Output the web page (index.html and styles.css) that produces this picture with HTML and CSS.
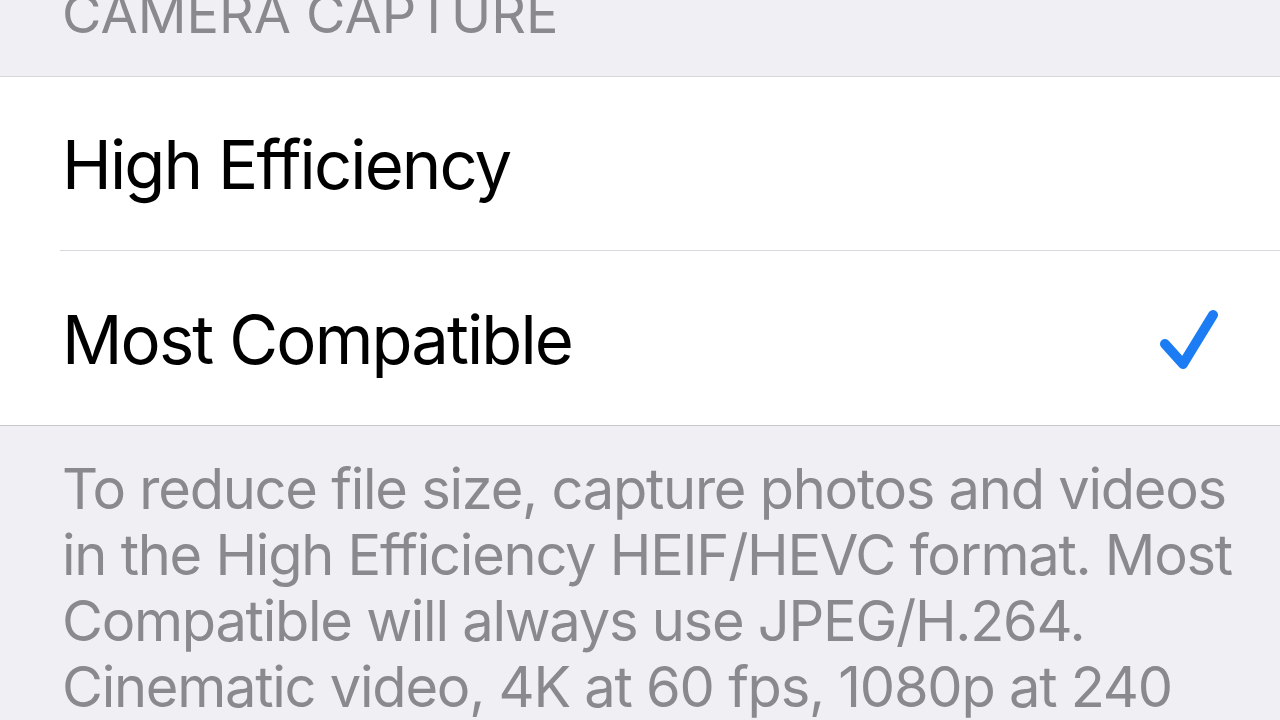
FILE: index.html
```html
<!DOCTYPE html>
<html lang="en">
<head>
<meta charset="utf-8">
<title>Camera Capture</title>
<link rel="stylesheet" href="styles.css">
</head>
<body>
<div class="page">
  <div class="section-header"><span class="section-title">CAMERA CAPTURE</span></div>
  <div class="group">
    <div class="row">
      <div class="row-inner with-sep"><span class="row-label">High Efficiency</span></div>
    </div>
    <div class="row">
      <div class="row-inner"><span class="row-label">Most Compatible</span>
        <svg class="check" width="64" height="64" viewBox="0 0 64 64" aria-hidden="true">
          <polyline points="7,36 25,56 55,7" fill="none" stroke="#1c7cf4" stroke-width="10" stroke-linecap="round" stroke-linejoin="round"/>
        </svg>
      </div>
    </div>
  </div>
  <div class="section-footer">To reduce file size, capture photos and videos in the High Efficiency HEIF/HEVC format. Most Compatible will always use JPEG/H.264. Cinematic video, 4K at 60 fps, 1080p at 240 fps, and HDR video require High Efficiency.</div>
</div>
</body>
</html>
```

FILE: styles.css
```css
html, body {
  margin: 0;
  padding: 0;
  background: #efeff4;
  font-family: "Inter", "Roboto", "Liberation Sans", sans-serif;
  overflow: hidden;
}

.page {
  width: 1280px;
  height: 720px;
  overflow: hidden;
}

.section-header {
  display: flow-root;
  height: 76px;
  padding-left: 62px;
  box-sizing: border-box;
}

.section-title {
  display: block;
  font-size: 54px;
  line-height: 54px;
  margin-top: -13px;
  color: #8a8a8e;
  letter-spacing: 0;
}

.group {
  background: #ffffff;
  border-top: 1px solid #d6d6da;
  border-bottom: 1px solid #c8c7cc;
}

.row {
  height: 174px;
}

.row-inner {
  height: 100%;
  margin-left: 60px;
  padding-left: 2px;
  padding-right: 58px;
  box-sizing: border-box;
  display: flex;
  align-items: center;
  justify-content: space-between;
}

.row-inner.with-sep {
  border-bottom: 1px solid #d9d9dd;
}

.row-label {
  font-size: 67px;
  letter-spacing: -1.9px;
  color: #000000;
  padding-top: 2px;
}

.check {
  display: block;
  margin-top: 4px;
}

.section-footer {
  padding: 30px 20px 0 62px;
  font-size: 56px;
  line-height: 66px;
  letter-spacing: -1.25px;
  color: #8a8a8e;
}
```
